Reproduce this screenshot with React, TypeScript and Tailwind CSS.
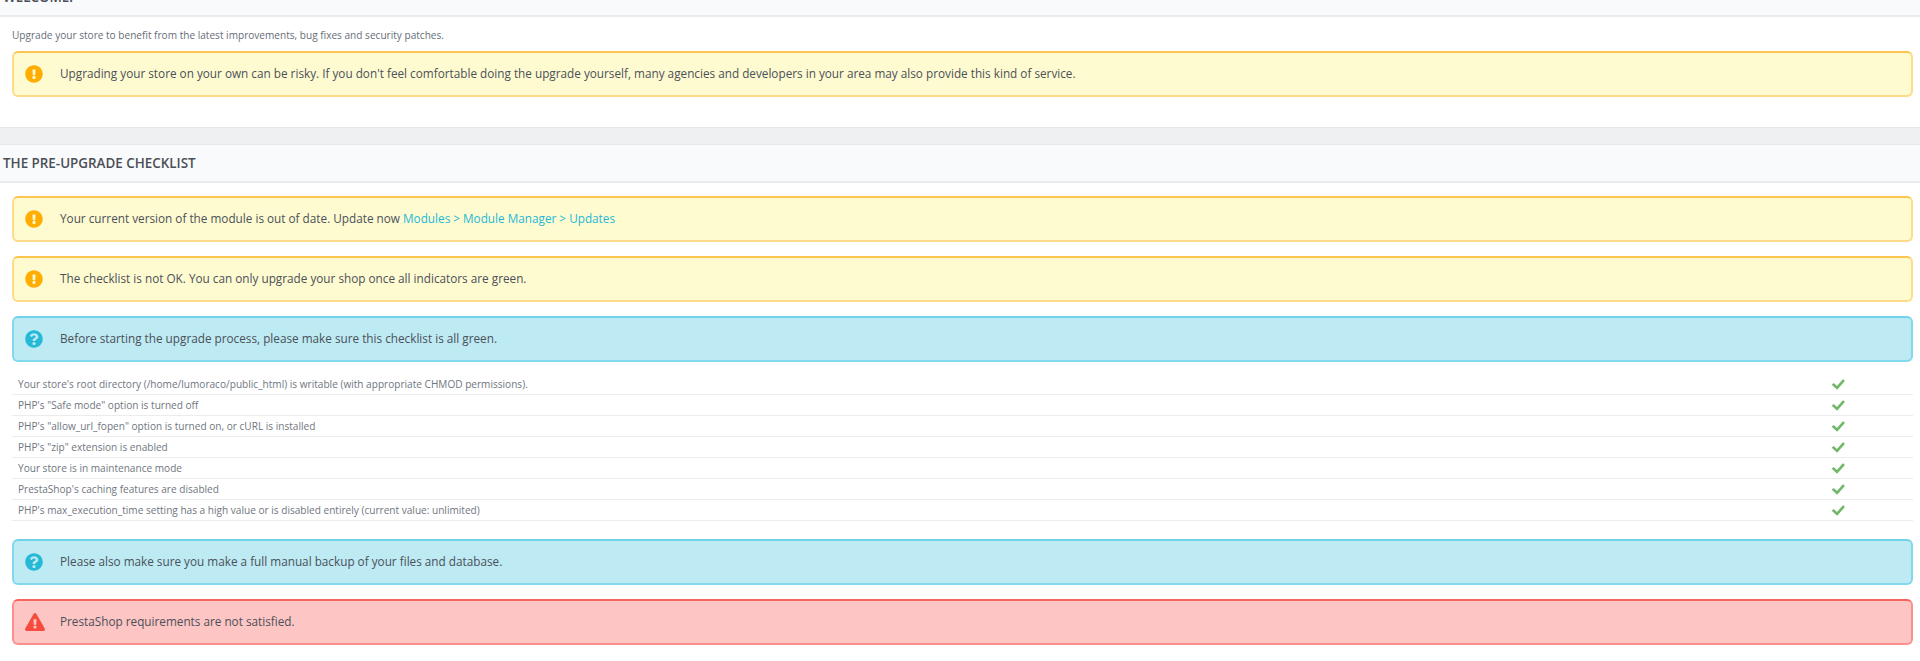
import { ReactNode } from "react"
import { FaCheck, FaExclamationCircle, FaExclamationTriangle, FaQuestionCircle } from "react-icons/fa"

const checks = [
	"Your store's root directory (/home/lumoraco/public_html) is writable (with appropriate CHMOD permissions).",
	"PHP's \"Safe mode\" option is turned off",
	"PHP's \"allow_url_fopen\" option is turned on, or cURL is installed",
	"PHP's \"zip\" extension is enabled",
	"Your store is in maintenance mode",
	"PrestaShop's caching features are disabled",
	"PHP's max_execution_time setting has a high value or is disabled entirely (current value: unlimited)",
]

function Alert({ kind, children }: { kind: "warning" | "info" | "danger"; children: ReactNode }) {
	return (
		<div
			className={`flex h-[46px] items-center rounded-[6px] border-2 pl-[11px] text-[11.76px] text-[#4b5159] ${
				kind === "warning"
					? "border-[#fedb88] border-t-[#fcc54f] bg-[#fffbd1]"
					: kind === "info"
						? "border-[#82d8ec] border-t-[#6fd2e8] bg-[#bdeaf3]"
						: "border-[#fd908d] border-t-[#f7635f] bg-[#fdc5c3]"
			}`}
		>
			<span className="flex w-[35px] shrink-0 items-center">
				{kind === "warning" && <FaExclamationCircle className="size-[18px] text-[#ffad00]" />}
				{kind === "info" && <FaQuestionCircle className="size-[18px] text-[#25b9d7]" />}
				{kind === "danger" && <FaExclamationTriangle className="size-[20px] text-[#f54c3e]" />}
			</span>
			<p>{children}</p>
		</div>
	)
}

function Header({ title }: { title: string }) {
	return (
		<header className="flex h-[38px] items-center border-b-2 border-[#e8ebef] bg-[#f9fafc] pt-[1px] pl-[3px] text-[13.4px] font-semibold text-[#4a4f57] uppercase">
			{title}
		</header>
	)
}

export default function App() {
	return (
		<main className="h-[661px] overflow-hidden bg-white font-['Open_Sans',sans-serif]">
			<section className="-mt-[21px] h-[148px]">
				<Header title="Welcome!" />
				<div className="pr-[7px] pl-[12px]">
					<p className="flex h-[34px] items-center pt-[4px] text-[10.08px] text-[#666e78]">
						Upgrade your store to benefit from the latest improvements, bug fixes and security patches.
					</p>
					<Alert kind="warning">
						Upgrading your store on your own can be risky. If you don't feel comfortable doing the upgrade
						yourself, many agencies and developers in your area may also provide this kind of service.
					</Alert>
				</div>
			</section>
			<div className="h-[18px] border-y border-[#e6e7e9] bg-[#eff0f2]" />
			<section>
				<Header title="The pre-upgrade checklist" />
				<div className="flex flex-col gap-[14px] pt-[13px] pr-[7px] pl-[12px]">
					<Alert kind="warning">
						Your current version of the module is out of date. Update now{" "}
						<a className="text-[#25b9d7]">Modules &gt; Module Manager &gt; Updates</a>
					</Alert>
					<Alert kind="warning">
						The checklist is not OK. You can only upgrade your shop once all indicators are green.
					</Alert>
					<Alert kind="info">Before starting the upgrade process, please make sure this checklist is all green.</Alert>
					<ul className="-mt-[2px] mb-[4px]">
						{checks.map((check) => (
							<li
								key={check}
								className="flex h-[21px] items-center justify-between border-b border-[#ececec] pt-[1px] pr-[68px] pl-[6px] text-[10.08px] text-[#6f7680]"
							>
								{check}
								<FaCheck className="size-[13px] -rotate-3 text-[#6fb867]" />
							</li>
						))}
					</ul>
					<Alert kind="info">Please also make sure you make a full manual backup of your files and database.</Alert>
					<Alert kind="danger">PrestaShop requirements are not satisfied.</Alert>
				</div>
			</section>
		</main>
	)
}
